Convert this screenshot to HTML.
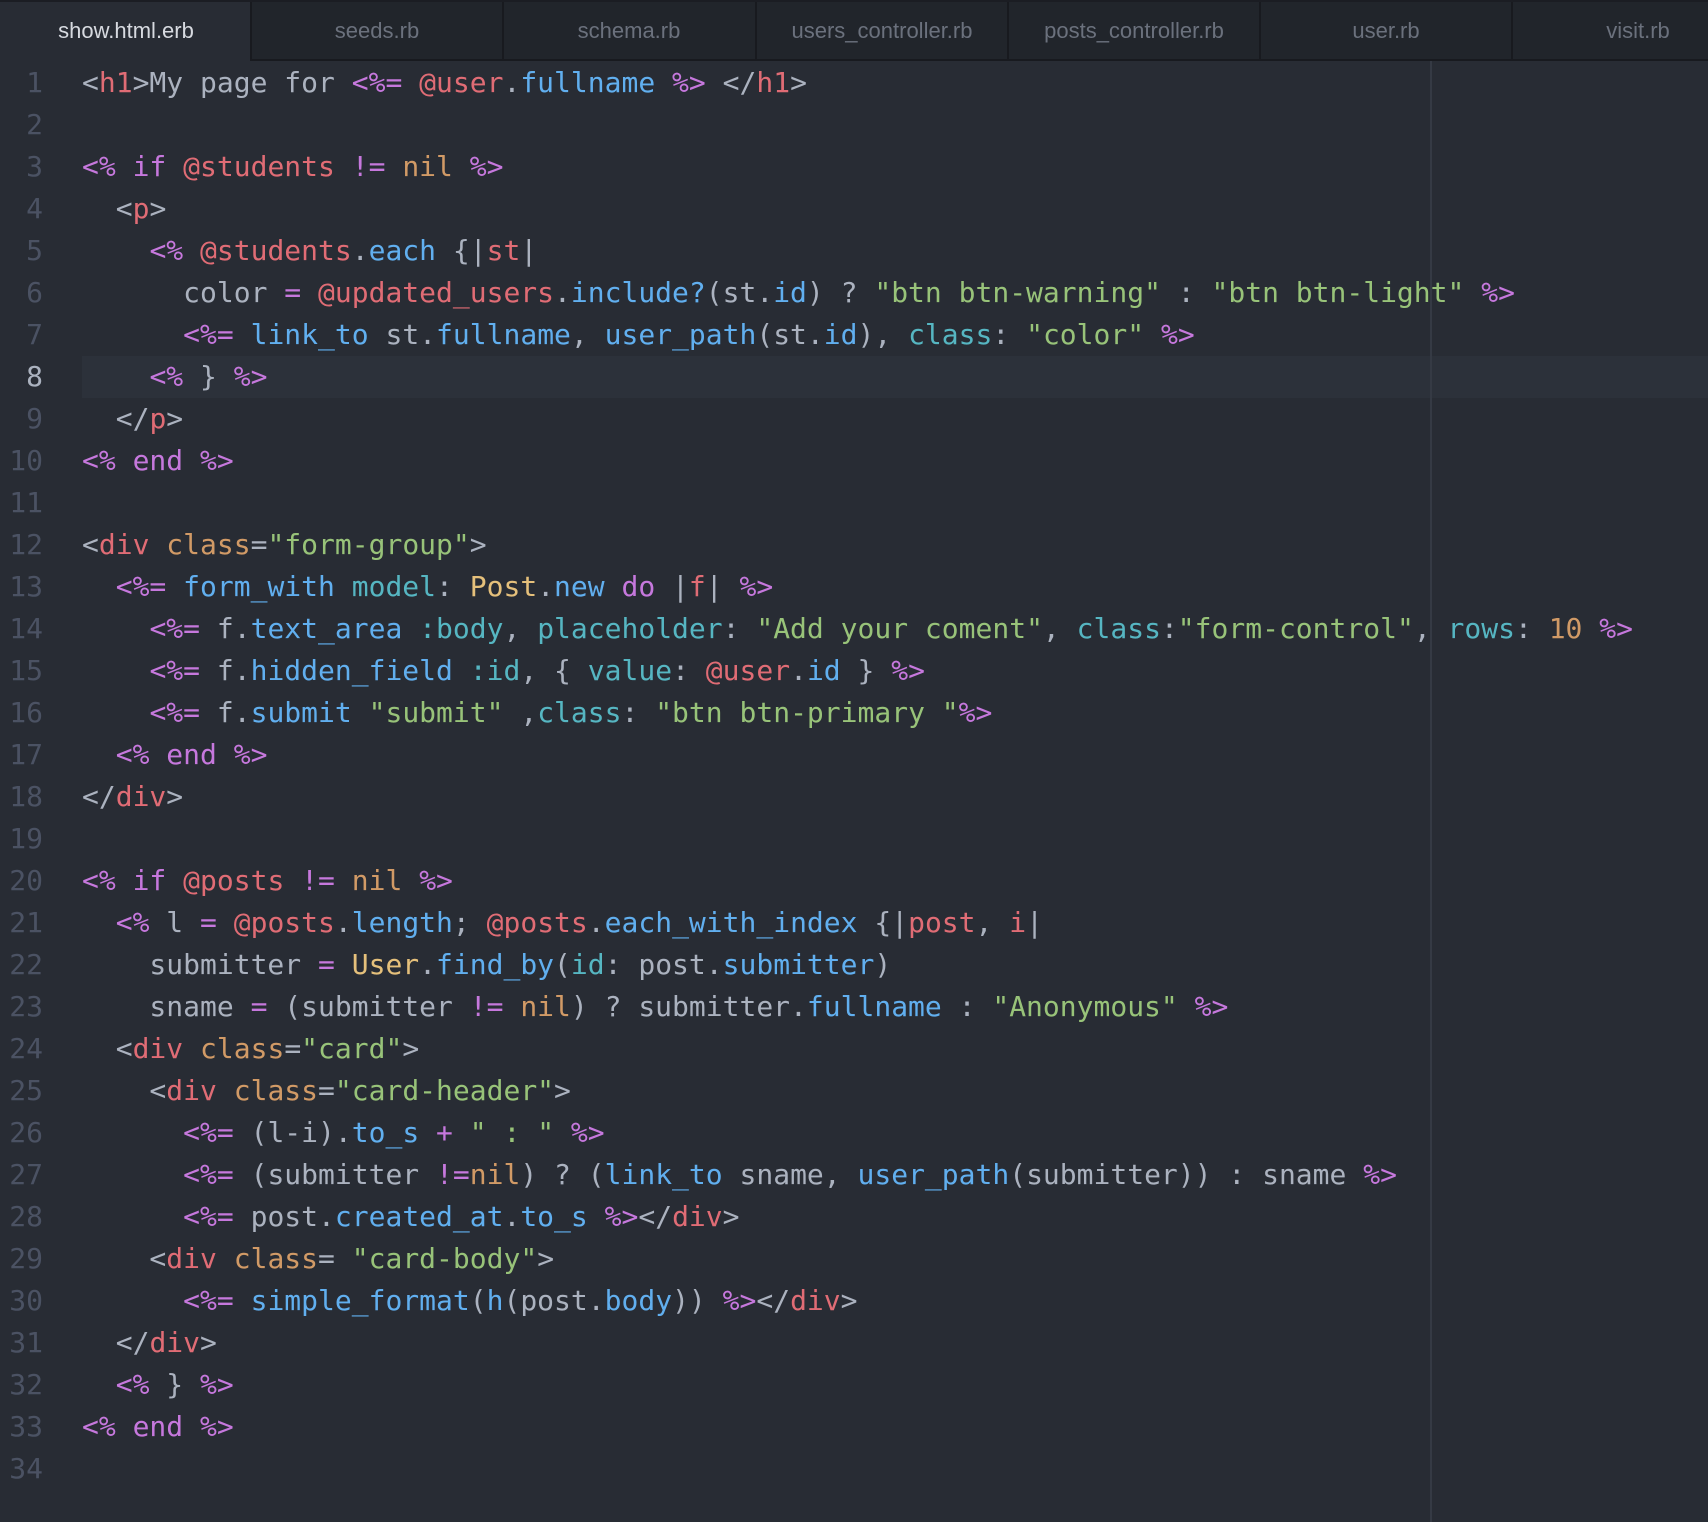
<!DOCTYPE html>
<html><head><meta charset="utf-8"><style>
html,body{margin:0;padding:0;width:1708px;height:1522px;background:#282c34;overflow:hidden}
.bar{position:absolute;left:0;top:0;width:1708px;height:61px;background:#21252b;border-top:2px solid #1b1d23;box-sizing:border-box;border-bottom:2px solid #181a1f}
.tab{position:absolute;top:0;height:59px;width:252px;box-sizing:border-box;border-left:2px solid #181a1f;font:22px "Liberation Sans",sans-serif;color:#6b717d;text-align:center;line-height:58px}
.tab.a{background:#282c34;color:#d7dae0;border-left:none;height:61px}
.guide{position:absolute;left:1430px;top:61px;width:2px;height:1461px;background:#353a44}
.hl{position:absolute;left:82px;top:356px;width:1626px;height:42px;background:#2c313a}
.code{position:absolute;left:0;top:62px;width:1708px;font:28px "DejaVu Sans Mono","Liberation Mono",monospace;color:#abb2bf}
.l{height:42px;line-height:42px;position:relative}
.n{position:absolute;left:0;width:43px;text-align:right;color:#4b5263}
.n.c{color:#abb2bf}
.t{position:absolute;left:82px;white-space:pre}
.p{color:#c678dd}.r{color:#e06c75}.b{color:#61afef}.g{color:#98c379}.o{color:#d19a66}.y{color:#e5c07b}.c{color:#56b6c2}
</style></head><body>
<div class="bar">
<div class="tab a" style="left:0">show.html.erb</div>
<div class="tab" style="left:250px">seeds.rb</div>
<div class="tab" style="left:502px">schema.rb</div>
<div class="tab" style="left:755px">users_controller.rb</div>
<div class="tab" style="left:1007px">posts_controller.rb</div>
<div class="tab" style="left:1259px">user.rb</div>
<div class="tab" style="left:1511px">visit.rb</div>
</div>
<div class="hl"></div>
<div class="guide"></div>
<div class="code">
<div class="l"><span class="n">1</span><span class="t">&lt;<span class="r">h1</span>&gt;My page for <span class="p">&lt;%=</span> <span class="r">@user</span>.<span class="b">fullname</span> <span class="p">%&gt;</span> &lt;/<span class="r">h1</span>&gt;</span></div>
<div class="l"><span class="n">2</span></div>
<div class="l"><span class="n">3</span><span class="t"><span class="p">&lt;% if</span> <span class="r">@students</span> <span class="p">!=</span> <span class="o">nil</span> <span class="p">%&gt;</span></span></div>
<div class="l"><span class="n">4</span><span class="t">  &lt;<span class="r">p</span>&gt;</span></div>
<div class="l"><span class="n">5</span><span class="t">    <span class="p">&lt;%</span> <span class="r">@students</span>.<span class="b">each</span> {|<span class="r">st</span>|</span></div>
<div class="l"><span class="n">6</span><span class="t">      color <span class="p">=</span> <span class="r">@updated_users</span>.<span class="b">include?</span>(st.<span class="b">id</span>) ? <span class="g">"btn btn-warning"</span> : <span class="g">"btn btn-light"</span> <span class="p">%&gt;</span></span></div>
<div class="l"><span class="n">7</span><span class="t">      <span class="p">&lt;%=</span> <span class="b">link_to</span> st.<span class="b">fullname</span>, <span class="b">user_path</span>(st.<span class="b">id</span>), <span class="c">class</span>: <span class="g">"color"</span> <span class="p">%&gt;</span></span></div>
<div class="l"><span class="n c">8</span><span class="t">    <span class="p">&lt;%</span> } <span class="p">%&gt;</span></span></div>
<div class="l"><span class="n">9</span><span class="t">  &lt;/<span class="r">p</span>&gt;</span></div>
<div class="l"><span class="n">10</span><span class="t"><span class="p">&lt;% end %&gt;</span></span></div>
<div class="l"><span class="n">11</span></div>
<div class="l"><span class="n">12</span><span class="t">&lt;<span class="r">div</span> <span class="o">class</span>=<span class="g">"form-group"</span>&gt;</span></div>
<div class="l"><span class="n">13</span><span class="t">  <span class="p">&lt;%=</span> <span class="b">form_with</span> <span class="c">model</span>: <span class="y">Post</span>.<span class="b">new</span> <span class="p">do</span> |<span class="r">f</span>| <span class="p">%&gt;</span></span></div>
<div class="l"><span class="n">14</span><span class="t">    <span class="p">&lt;%=</span> f.<span class="b">text_area</span> <span class="c">:body</span>, <span class="c">placeholder</span>: <span class="g">"Add your coment"</span>, <span class="c">class</span>:<span class="g">"form-control"</span>, <span class="c">rows</span>: <span class="o">10</span> <span class="p">%&gt;</span></span></div>
<div class="l"><span class="n">15</span><span class="t">    <span class="p">&lt;%=</span> f.<span class="b">hidden_field</span> <span class="c">:id</span>, { <span class="c">value</span>: <span class="r">@user</span>.<span class="b">id</span> } <span class="p">%&gt;</span></span></div>
<div class="l"><span class="n">16</span><span class="t">    <span class="p">&lt;%=</span> f.<span class="b">submit</span> <span class="g">"submit"</span> ,<span class="c">class</span>: <span class="g">"btn btn-primary "</span><span class="p">%&gt;</span></span></div>
<div class="l"><span class="n">17</span><span class="t">  <span class="p">&lt;% end %&gt;</span></span></div>
<div class="l"><span class="n">18</span><span class="t">&lt;/<span class="r">div</span>&gt;</span></div>
<div class="l"><span class="n">19</span></div>
<div class="l"><span class="n">20</span><span class="t"><span class="p">&lt;% if</span> <span class="r">@posts</span> <span class="p">!=</span> <span class="o">nil</span> <span class="p">%&gt;</span></span></div>
<div class="l"><span class="n">21</span><span class="t">  <span class="p">&lt;%</span> l <span class="p">=</span> <span class="r">@posts</span>.<span class="b">length</span>; <span class="r">@posts</span>.<span class="b">each_with_index</span> {|<span class="r">post</span>, <span class="r">i</span>|</span></div>
<div class="l"><span class="n">22</span><span class="t">    submitter <span class="p">=</span> <span class="y">User</span>.<span class="b">find_by</span>(<span class="c">id</span>: post.<span class="b">submitter</span>)</span></div>
<div class="l"><span class="n">23</span><span class="t">    sname <span class="p">=</span> (submitter <span class="p">!=</span> <span class="o">nil</span>) ? submitter.<span class="b">fullname</span> : <span class="g">"Anonymous"</span> <span class="p">%&gt;</span></span></div>
<div class="l"><span class="n">24</span><span class="t">  &lt;<span class="r">div</span> <span class="o">class</span>=<span class="g">"card"</span>&gt;</span></div>
<div class="l"><span class="n">25</span><span class="t">    &lt;<span class="r">div</span> <span class="o">class</span>=<span class="g">"card-header"</span>&gt;</span></div>
<div class="l"><span class="n">26</span><span class="t">      <span class="p">&lt;%=</span> (l-i).<span class="b">to_s</span> <span class="p">+</span> <span class="g">" : "</span> <span class="p">%&gt;</span></span></div>
<div class="l"><span class="n">27</span><span class="t">      <span class="p">&lt;%=</span> (submitter <span class="p">!=</span><span class="o">nil</span>) ? (<span class="b">link_to</span> sname, <span class="b">user_path</span>(submitter)) : sname <span class="p">%&gt;</span></span></div>
<div class="l"><span class="n">28</span><span class="t">      <span class="p">&lt;%=</span> post.<span class="b">created_at</span>.<span class="b">to_s</span> <span class="p">%&gt;</span>&lt;/<span class="r">div</span>&gt;</span></div>
<div class="l"><span class="n">29</span><span class="t">    &lt;<span class="r">div</span> <span class="o">class</span>= <span class="g">"card-body"</span>&gt;</span></div>
<div class="l"><span class="n">30</span><span class="t">      <span class="p">&lt;%=</span> <span class="b">simple_format</span>(<span class="b">h</span>(post.<span class="b">body</span>)) <span class="p">%&gt;</span>&lt;/<span class="r">div</span>&gt;</span></div>
<div class="l"><span class="n">31</span><span class="t">  &lt;/<span class="r">div</span>&gt;</span></div>
<div class="l"><span class="n">32</span><span class="t">  <span class="p">&lt;%</span> } <span class="p">%&gt;</span></span></div>
<div class="l"><span class="n">33</span><span class="t"><span class="p">&lt;% end %&gt;</span></span></div>
<div class="l"><span class="n">34</span></div>
</div>
</body></html>
